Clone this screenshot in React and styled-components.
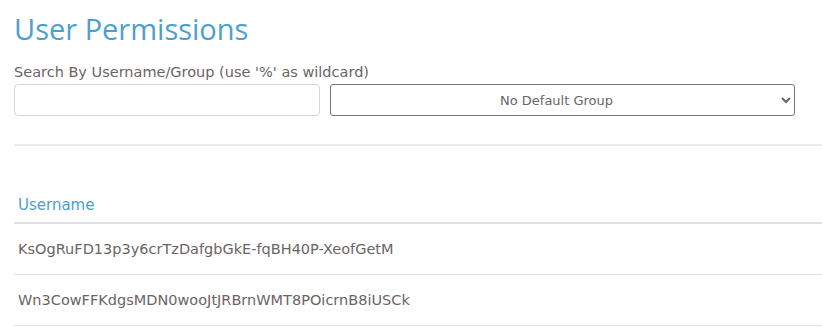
import React from "react";
import styled, { createGlobalStyle } from "styled-components";

const Global = createGlobalStyle`
  html, body { margin: 0; padding: 0; background: #fff; }
  body { font-family: "DejaVu Sans", "Open Sans", sans-serif; color: #6c6464; }
`;

const Page = styled.div`
  padding: 10px 0 0 14px;
  overflow: hidden;
`;

const Title = styled.h1`
  margin: 0;
  font-family: "Open Sans", "Liberation Sans", sans-serif;
  font-size: 29px;
  font-weight: 400;
  line-height: 38px;
  color: #4ba0cf;
`;

const Label = styled.label`
  display: block;
  margin-top: 14px;
  font-size: 14.5px;
  line-height: 20px;
  color: #6c6464;
`;

const Controls = styled.div`
  display: grid;
  grid-template-columns: 306px 465px;
  column-gap: 10px;
  margin-top: 2px;
`;

const TextInput = styled.input`
  box-sizing: border-box;
  height: 32px;
  border: 1px solid #d3d6de;
  border-radius: 4px;
  padding: 0 10px;
  font: inherit;
  font-size: 14px;
  outline: none;
`;

const Select = styled.select`
  box-sizing: border-box;
  height: 32px;
  border: 1px solid #767676;
  border-radius: 3px;
  background: #fff;
  font: inherit;
  font-size: 13px;
  color: #6c6464;
  text-align: center;
  text-align-last: center;
  padding: 0 6px;
`;

const Divider = styled.hr`
  margin: 28px 0 0 0;
  border: 0;
  border-top: 2px solid #ececec;
`;

const Table = styled.table`
  width: 100%;
  margin-top: 44px;
  border-collapse: collapse;
`;

const HeadCell = styled.th`
  text-align: left;
  font-size: 15px;
  font-weight: 400;
  color: #4ba0cf;
  line-height: 21px;
  padding: 5px 4px 6px;
  border-bottom: 2px solid #dde0e6;
`;

const Row = styled.tr`
  border-bottom: 1px solid #e3e3e3;
`;

const Cell = styled.td`
  font-size: 14.5px;
  line-height: 21px;
  padding: 15px 4px 14px;
  color: #6c6464;
`;

const users = [
  "KsOgRuFD13p3y6crTzDafgbGkE-fqBH40P-XeofGetM",
  "Wn3CowFFKdgsMDN0wooJtJRBrnWMT8POicrnB8iUSCk",
];

export default function App() {
  return (
    <>
      <Global />
      <Page>
        <Title>User Permissions</Title>
        <Label>Search By Username/Group (use '%' as wildcard)</Label>
        <Controls>
          <TextInput type="text" />
          <Select defaultValue="none">
            <option value="none">No Default Group</option>
          </Select>
        </Controls>
        <Divider />
        <Table>
          <thead>
            <tr>
              <HeadCell>Username</HeadCell>
            </tr>
          </thead>
          <tbody>
            {users.map((u) => (
              <Row key={u}>
                <Cell>{u}</Cell>
              </Row>
            ))}
          </tbody>
        </Table>
      </Page>
    </>
  );
}
